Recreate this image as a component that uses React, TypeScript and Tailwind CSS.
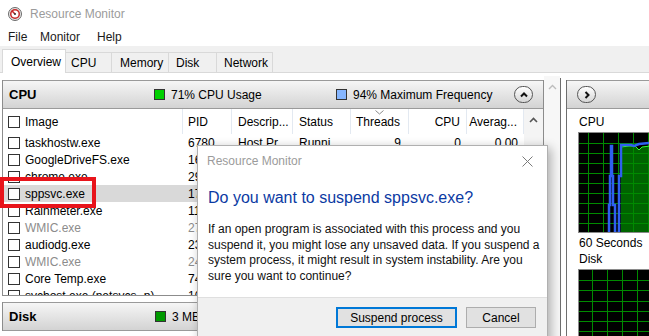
import React from 'react';

type Row = [string, string, string, string, string, string, string, boolean];

const rows: Row[] = [
  ['taskhostw.exe', '6780', 'Host Pr...', 'Runni...', '9', '0', '0.00', false],
  ['GoogleDriveFS.exe', '16208', 'Google ...', 'Runni...', '42', '0', '0.12', false],
  ['chrome.exe', '2940', 'Google ...', 'Runni...', '18', '0', '0.05', false],
  ['sppsvc.exe', '17432', 'Micros...', 'Runni...', '6', '0', '0.00', false],
  ['Rainmeter.exe', '11520', 'Rainme...', 'Runni...', '12', '0', '0.41', false],
  ['WMIC.exe', '27364', 'WMI C...', 'Termi...', '0', '0', '0.00', true],
  ['audiodg.exe', '23048', 'Windo...', 'Runni...', '5', '0', '0.02', false],
  ['WMIC.exe', '24196', 'WMI C...', 'Termi...', '0', '0', '0.00', true],
  ['Core Temp.exe', '7480', 'Core Te...', 'Runni...', '4', '0', '0.03', false],
  ['svchost.exe (netsvcs -p)', '1036', 'Host Pr...', 'Runni...', '30', '0', '0.08', false],
];

function Check() {
  return <div className="w-[12px] h-[12px] border border-[#333333] bg-white shrink-0" />;
}

function CircleBtn({ dir }: { dir: 'up' | 'right' }) {
  return (
    <div className="w-[19px] h-[17px] rounded-full border border-[#555555] bg-linear-to-b from-[#ffffff] to-[#d6d6d6] flex items-center justify-center">
      <svg width="10" height="10" viewBox="0 0 10 10">
        {dir === 'up' ? (
          <polyline points="2,6.5 5,3.5 8,6.5" fill="none" stroke="#111" strokeWidth="2" />
        ) : (
          <polyline points="3.5,2 6.5,5 3.5,8" fill="none" stroke="#111" strokeWidth="2" />
        )}
      </svg>
    </div>
  );
}

function SectionHeader({ children }: { children: React.ReactNode }) {
  return (
    <div className="h-[29px] border-t border-b border-[#9a9a9a] bg-linear-to-b from-[#f6f6f6] to-[#d3d3d3] flex items-center">
      {children}
    </div>
  );
}

function Grid1() {
  const v = [9, 24, 39, 54, 69];
  const h = [10, 20, 30, 40, 50, 60, 70, 80, 90];
  return (
    <svg width="80" height="100" viewBox="0 0 80 100" className="block">
      <rect width="80" height="100" fill="#000" />
      <polygon points="42,100 42,14 50,13 56,13 60,17 63,14 80,12 80,100" fill="#006400" />
      {v.map((x) => (
        <line key={'v' + x} x1={x + 0.5} y1="0" x2={x + 0.5} y2="100" stroke="#008a00" strokeWidth="1" />
      ))}
      {h.map((y) => (
        <line key={'h' + y} x1="0" y1={y + 0.5} x2="80" y2={y + 0.5} stroke="#008a00" strokeWidth="1" />
      ))}
      <polyline points="42,14 50,13 56,13 60,17 63,14 80,12" fill="none" stroke="#33ff33" strokeWidth="1" />
      <polyline
        points="30,100 30,72 31,72 31,43 32,43 32,13 33,13 33,43 34,43 34,72 36,72 36,100 40,100 40,43 42,43 42,12 52,12 55,13 60,11 80,9"
        fill="none"
        stroke="#2f5ff0"
        strokeWidth="2.5"
      />
    </svg>
  );
}

function Grid2() {
  const v = [13, 28, 43, 58, 73];
  const h = [10, 20, 31, 41, 51, 61];
  return (
    <svg width="80" height="70" viewBox="0 0 80 70" className="block">
      <rect width="80" height="70" fill="#000" />
      {v.map((x) => (
        <line key={'v' + x} x1={x + 0.5} y1="0" x2={x + 0.5} y2="70" stroke="#008a00" strokeWidth="1" />
      ))}
      {h.map((y) => (
        <line key={'h' + y} x1="0" y1={y + 0.5} x2="80" y2={y + 0.5} stroke="#008a00" strokeWidth="1" />
      ))}
    </svg>
  );
}

export default function App() {
  return (
    <div className="w-[649px] h-[336px] relative overflow-hidden bg-white font-['Liberation_Sans',Arial,sans-serif] text-[12px] text-black leading-none">
      {/* Title bar */}
      <div className="h-[27px] flex items-center pl-[8px]">
        <svg width="14" height="14" viewBox="0 0 14 14">
          <circle cx="7" cy="7" r="6.5" fill="#e6e6e6" stroke="#6b6b6b" strokeWidth="1" />
          <circle cx="7" cy="7" r="5" fill="#c62828" />
          <circle cx="7" cy="7" r="3.5" fill="#ffffff" />
          <line x1="7" y1="7" x2="3.8" y2="3.8" stroke="#c62828" strokeWidth="1.6" />
          <circle cx="7" cy="7" r="1" fill="#333" />
        </svg>
        <span className="ml-[8px] text-[#9b9b9b]">Resource Monitor</span>
      </div>
      {/* Menu */}
      <div className="h-[19px] flex items-center pl-[8px] text-[#1a1a1a]">
        <span className="w-[32px]">File</span>
        <span className="w-[57px]">Monitor</span>
        <span>Help</span>
      </div>
      {/* Tabs */}
      <div className="h-[27px] bg-[#f0f0f0] border-b border-[#d9d9d9] flex items-end pl-[2px]">
        <div className="relative -mb-px w-[64px] h-[24px] bg-white border border-b-0 border-[#d9d9d9] flex items-center pl-[8px]">
          Overview
        </div>
        <div className="w-[46px] h-[20px] border-t border-r border-[#d9d9d9] flex items-center pl-[5px]">CPU</div>
        <div className="w-[57px] h-[20px] border-t border-r border-[#d9d9d9] flex items-center pl-[8px]">Memory</div>
        <div className="w-[48px] h-[20px] border-t border-r border-[#d9d9d9] flex items-center pl-[7px]">Disk</div>
        <div className="w-[56px] h-[20px] border-t border-r border-[#d9d9d9] flex items-center pl-[7px]">Network</div>
      </div>

      {/* Content */}
      <div className="flex h-[263px]">
        {/* Left pane */}
        <div className="w-[544px] pl-[2px] pt-[7px]">
          <div className="w-[542px] border-x border-[#8c8c8c]">
            <SectionHeader>
              <span className="w-[151px] pl-[6px] font-bold text-[13px]">CPU</span>
              <div className="w-[11px] h-[11px] border border-[#333] bg-[#00d000]" />
              <span className="ml-[6px] w-[165px]">71% CPU Usage</span>
              <div className="w-[11px] h-[11px] border border-[#333] bg-[#86b6ff]" />
              <span className="ml-[6px]">94% Maximum Frequency</span>
              <div className="ml-auto mr-[10px]">
                <CircleBtn dir="up" />
              </div>
            </SectionHeader>
            <div className="flex">
              <div className="w-[521px]">
                {/* column header */}
                <div className="h-[25px] flex items-center">
                  <div className="w-[180px] h-full flex items-center pl-[5px] border-r border-[#e3e9f1]">
                    <Check />
                    <span className="ml-[5px]">Image</span>
                  </div>
                  <div className="w-[49px] h-full flex items-center pl-[5px] border-r border-[#e3e9f1]">PID</div>
                  <div className="w-[61px] h-full flex items-center pl-[6px] border-r border-[#e3e9f1]">Descrip...</div>
                  <div className="w-[58px] h-full flex items-center pl-[6px] border-r border-[#e3e9f1]">Status</div>
                  <div className="relative w-[58px] h-full flex items-center justify-end pr-[8px] border-r border-[#e3e9f1]">
                    <svg width="9" height="5" viewBox="0 0 9 5" className="absolute top-[1px] left-[24px]">
                      <polyline points="0.5,0.5 4.5,4 8.5,0.5" fill="none" stroke="#8a8a8a" strokeWidth="1" />
                    </svg>
                    Threads
                  </div>
                  <div className="w-[58px] h-full flex items-center justify-end pr-[6px] border-r border-[#e3e9f1]">CPU</div>
                  <div className="w-[57px] h-full flex items-center justify-end pr-[6px] border-r border-[#e3e9f1]">Averag...</div>
                </div>
                {/* rows */}
                <div className="h-[161px] overflow-hidden">
                  {rows.map((r, i) => (
                    <div key={i} className={`h-[17px] flex items-center ${i === 3 ? 'bg-[#d9d9d9]' : ''} ${r[7] ? 'text-[#8c8c8c]' : ''}`}>
                      <div className="w-[180px] flex items-center pl-[5px] whitespace-nowrap">
                        <Check />
                        <span className="ml-[5px]">{r[0]}</span>
                      </div>
                      <div className="w-[49px] pl-[5px]">{r[1]}</div>
                      <div className="w-[61px] pl-[6px] whitespace-nowrap">{r[2]}</div>
                      <div className="w-[58px] pl-[6px] whitespace-nowrap">{r[3]}</div>
                      <div className="w-[58px] text-right pr-[8px]">{r[4]}</div>
                      <div className="w-[58px] text-right pr-[6px]">{r[5]}</div>
                      <div className="w-[57px] text-right pr-[6px]">{r[6]}</div>
                    </div>
                  ))}
                </div>
              </div>
              {/* inner scrollbar */}
              <div className="w-[19px] bg-[#f4f4f4] flex justify-center pt-[8px]">
                <svg width="9" height="6" viewBox="0 0 9 6">
                  <polyline points="1,5 4.5,1.5 8,5" fill="none" stroke="#555" strokeWidth="1.6" />
                </svg>
              </div>
            </div>
          </div>
          <div className="w-[542px] border-t border-[#8c8c8c]" />
          <div className="w-[542px] mt-[6px] border-x border-[#8c8c8c]">
            <SectionHeader>
              <span className="w-[152px] pl-[6px] font-bold text-[13px]">Disk</span>
              <div className="w-[11px] h-[11px] border border-[#333] bg-[#009a00]" />
              <span className="ml-[6px]">3 MB/sec Disk I/O</span>
            </SectionHeader>
          </div>
        </div>

        {/* outer scrollbar */}
        <div className="w-[16px] mt-[3px] bg-[#f7f7f7] flex justify-center pt-[8px]">
          <svg width="9" height="6" viewBox="0 0 9 6">
            <polyline points="1,5 4.5,1.5 8,5" fill="none" stroke="#bdbdbd" strokeWidth="1.4" />
          </svg>
        </div>

        {/* splitter */}
        <div className="w-[6px] mt-[5px] border-l border-[#6e6e6e]" />

        {/* right pane */}
        <div className="flex-1 pt-[7px] overflow-hidden">
          <div className="border-l border-[#6e6e6e] h-full">
            <SectionHeader>
              <div className="ml-[10px]">
                <CircleBtn dir="right" />
              </div>
            </SectionHeader>
            <div className="pl-[12px] pt-[3px] h-[23px] flex items-center">CPU</div>
            <div className="ml-[11px] border-y border-l border-[#8a8a8a] h-[101px] overflow-hidden">
              <Grid1 />
            </div>
            <div className="pl-[12px] mt-[2px] leading-[16px]">60 Seconds</div>
            <div className="pl-[12px] leading-[16px]">Disk</div>
            <div className="ml-[11px] mt-[2px] border-t border-l border-[#8a8a8a] overflow-hidden">
              <Grid2 />
            </div>
          </div>
        </div>
      </div>

      {/* red highlight box */}
      <div className="absolute left-0 top-[177px] w-[96px] h-[31px] border-[4px] border-[#e8141b]" />

      {/* Dialog */}
      <div className="absolute left-[197px] top-[145px] w-[351px] h-[200px] bg-white border border-[#b0b0b0] shadow-[3px_3px_10px_rgba(0,0,0,0.3)] flex flex-col">
        <div className="h-[30px] flex items-center justify-between pl-[9px] pr-[14px]">
          <span className="text-[#9b9b9b]">Resource Monitor</span>
          <svg width="11" height="11" viewBox="0 0 11 11">
            <line x1="0.5" y1="0.5" x2="10.5" y2="10.5" stroke="#7a7a7a" strokeWidth="1" />
            <line x1="10.5" y1="0.5" x2="0.5" y2="10.5" stroke="#7a7a7a" strokeWidth="1" />
          </svg>
        </div>
        <div className="mt-[11px] px-[10px] text-[16px] leading-[22px] text-[#0b3aa3] whitespace-nowrap">Do you want to suspend sppsvc.exe?</div>
        <div className="mt-[13px] px-[10px] text-[12px] leading-[15.5px] text-[#111] whitespace-nowrap">
          If an open program is associated with this process and you
          <br />
          suspend it, you might lose any unsaved data. If you suspend a
          <br />
          system process, it might result in system instability. Are you
          <br />
          sure you want to continue?
        </div>
        <div className="mt-[13px] flex-1 bg-[#f0f0f0] border-t border-[#dfdfdf] flex justify-end items-start pt-[9px] pr-[11px]">
          <div className="w-[121px] h-[21px] border-2 border-[#0078d7] bg-[#e1e1e1] flex items-center justify-center">
            Suspend process
          </div>
          <div className="ml-[9px] w-[70px] h-[21px] border border-[#adadad] bg-[#e1e1e1] flex items-center justify-center">
            Cancel
          </div>
        </div>
      </div>
    </div>
  );
}
